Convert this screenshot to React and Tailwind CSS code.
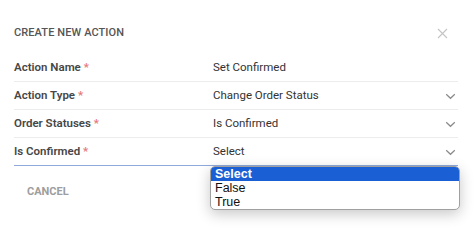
import React from "react";

const Chevron = () => (
  <svg width="11" height="7" viewBox="0 0 11 7" className="shrink-0">
    <path d="M1.2 1.2 L5.5 5.3 L9.8 1.2" fill="none" stroke="#8a8a8a" strokeWidth="1.2" />
  </svg>
);

function Row({ label, value, chevron, last }) {
  return (
    <div
      className={`flex items-center h-[28px] border-b ${last ? "border-[#8fa9dc]" : "border-[#ececec]"}`}
    >
      <div className="w-[199px] text-[11.5px] font-semibold text-[#474747]">
        {label} <span className="text-[#e57878]">*</span>
      </div>
      <div className="flex-1 text-[11.5px] text-[#333]">{value}</div>
      {chevron && (
        <div className="pr-[2px] pt-[1px]">
          <Chevron />
        </div>
      )}
    </div>
  );
}

export default function App() {
  return (
    <div
      className="relative w-[474px] h-[231px] bg-white overflow-hidden"
      style={{ fontFamily: "Roboto, 'Liberation Sans', sans-serif" }}
    >
      <div className="pl-[14px] pr-[16px] pt-[26px]">
        <div className="flex items-center justify-between h-[14px]">
          <div className="text-[11px] font-medium text-[#555] tracking-[0.1px]">CREATE NEW ACTION</div>
          <svg width="11" height="11" viewBox="0 0 11 11" className="mr-[10px]">
            <path d="M1 1 L10 10 M10 1 L1 10" stroke="#c4c4c4" strokeWidth="1.1" />
          </svg>
        </div>
        <div className="mt-[14px]">
          <Row label="Action Name" value="Set Confirmed" />
          <Row label="Action Type" value="Change Order Status" chevron />
          <Row label="Order Statuses" value="Is Confirmed" chevron />
          <Row label="Is Confirmed" value="Select" chevron last />
        </div>
        <div className="pl-[13px] pt-[18px] text-[11px] font-bold text-[#9e9e9e]">CANCEL</div>
      </div>

      <div
        className="absolute left-[210px] top-[166px] w-[250px] h-[44px] bg-white border border-[#a0a0a0] rounded-[5px] overflow-hidden shadow-[0_4px_14px_rgba(0,0,0,0.22)] text-[12.5px] leading-[14px] text-[#111]"
        style={{ fontFamily: "'Liberation Sans', Arial, sans-serif" }}
      >
        <div className="bg-[#1a5fd3] text-white font-bold pl-[4px] h-[14px]">Select</div>
        <div className="pl-[4px] h-[14px]">False</div>
        <div className="pl-[4px] h-[14px]">True</div>
      </div>
    </div>
  );
}
